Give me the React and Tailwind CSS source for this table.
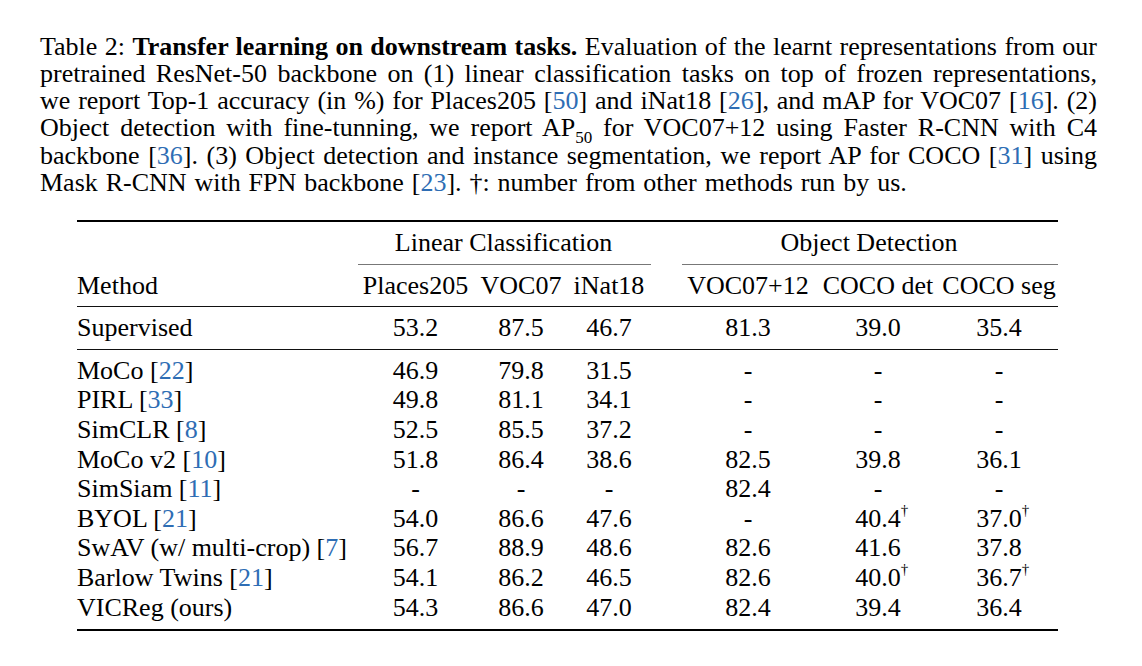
import React from 'react';

const Cite = ({ n }) => (
  <span>
    [<span className="text-[#2e6db4]">{n}</span>]
  </span>
);

const rows = [
  { name: 'MoCo', cite: '22', vals: ['46.9', '79.8', '31.5', '-', '-', '-'] },
  { name: 'PIRL', cite: '33', vals: ['49.8', '81.1', '34.1', '-', '-', '-'] },
  { name: 'SimCLR', cite: '8', vals: ['52.5', '85.5', '37.2', '-', '-', '-'] },
  { name: 'MoCo v2', cite: '10', vals: ['51.8', '86.4', '38.6', '82.5', '39.8', '36.1'] },
  { name: 'SimSiam', cite: '11', vals: ['-', '-', '-', '82.4', '-', '-'] },
  { name: 'BYOL', cite: '21', vals: ['54.0', '86.6', '47.6', '-', '40.4†', '37.0†'] },
  { name: 'SwAV (w/ multi-crop)', cite: '7', vals: ['56.7', '88.9', '48.6', '82.6', '41.6', '37.8'] },
  { name: 'Barlow Twins', cite: '21', vals: ['54.1', '86.2', '46.5', '82.6', '40.0†', '36.7†'] },
  { name: 'VICReg (ours)', cite: null, vals: ['54.3', '86.6', '47.0', '82.4', '39.4', '36.4'] },
];

const grid = 'grid grid-cols-[278px_121px_90px_86px_28px_136px_124px_118px] h-[29.6px] items-center';

const Value = ({ v }) => {
  const dagger = v.endsWith('†');
  const num = dagger ? v.slice(0, -1) : v;
  return (
    <div className="text-center">
      <span className="relative">
        {num}
        {dagger && <span className="absolute left-full top-[-8px] text-[15px]">†</span>}
      </span>
    </div>
  );
};

const Row = ({ label, vals }) => (
  <div className={grid}>
    <div className="whitespace-nowrap">{label}</div>
    <Value v={vals[0]} />
    <Value v={vals[1]} />
    <Value v={vals[2]} />
    <div />
    <Value v={vals[3]} />
    <Value v={vals[4]} />
    <Value v={vals[5]} />
  </div>
);

const Line = ({ children, last }) => (
  <div className={last ? 'text-left [word-spacing:1.4px]' : 'text-justify [text-align-last:justify]'}>{children}</div>
);

export default function App() {
  return (
    <div className="w-[1142px] h-[666px] bg-white text-black font-['Liberation_Serif',serif] text-[26px] overflow-hidden">
      <div className="pt-[33px] pl-[40px] w-[1097px] leading-[27px] whitespace-nowrap">
        <Line>
          Table 2: <b>Transfer learning on downstream tasks.</b> Evaluation of the learnt representations from our
        </Line>
        <Line>pretrained ResNet-50 backbone on (1) linear classification tasks on top of frozen representations,</Line>
        <Line>
          we report Top-1 accuracy (in %) for Places205 <Cite n="50" /> and iNat18 <Cite n="26" />, and mAP for VOC07{' '}
          <Cite n="16" />. (2)
        </Line>
        <Line>
          Object detection with fine-tunning, we report AP<sub className="text-[17px] leading-none align-[-3px]">50</sub> for
          VOC07+12 using Faster R-CNN with C4
        </Line>
        <Line>
          backbone <Cite n="36" />. (3) Object detection and instance segmentation, we report AP for COCO <Cite n="31" />{' '}
          using
        </Line>
        <Line last>
          Mask R-CNN with FPN backbone <Cite n="23" />. †: number from other methods run by us.
        </Line>
      </div>

      <div className="ml-[77px] w-[981px] mt-[24px] leading-[29.6px]">
        <div className="h-[2px] bg-black" />
        <div className="mt-[6px] grid grid-cols-[278px_297px_28px_378px] h-[29.6px] items-center">
          <div />
          <div className="text-center">Linear Classification</div>
          <div />
          <div className="text-center">Object Detection</div>
        </div>
        <div className="mt-[6px] grid grid-cols-[278px_297px_28px_378px] h-px">
          <div />
          <div className="ml-[3px] mr-px bg-[#777]" />
          <div />
          <div className="ml-[2px] bg-[#777]" />
        </div>
        <div className={`mt-[6px] ${grid}`}>
          <div>Method</div>
          <div className="text-center">Places205</div>
          <div className="text-center">VOC07</div>
          <div className="text-center">iNat18</div>
          <div />
          <div className="text-center whitespace-nowrap">VOC07+12</div>
          <div className="text-center whitespace-nowrap">COCO det</div>
          <div className="text-center whitespace-nowrap">COCO seg</div>
        </div>
        <div className="mt-[6px] h-px bg-[#111]" />
        <div className="mt-[6px]">
          <Row label="Supervised" vals={['53.2', '87.5', '46.7', '81.3', '39.0', '35.4']} />
        </div>
        <div className="mt-[6px] h-px bg-[#111]" />
        <div className="mt-[6px]">
          {rows.map((r, i) => (
            <Row
              key={i}
              label={
                <span>
                  {r.name}
                  {r.cite && (
                    <>
                      {' '}
                      <Cite n={r.cite} />
                    </>
                  )}
                </span>
              }
              vals={r.vals}
            />
          ))}
        </div>
        <div className="mt-[7px] h-[2px] bg-black" />
      </div>
    </div>
  );
}
